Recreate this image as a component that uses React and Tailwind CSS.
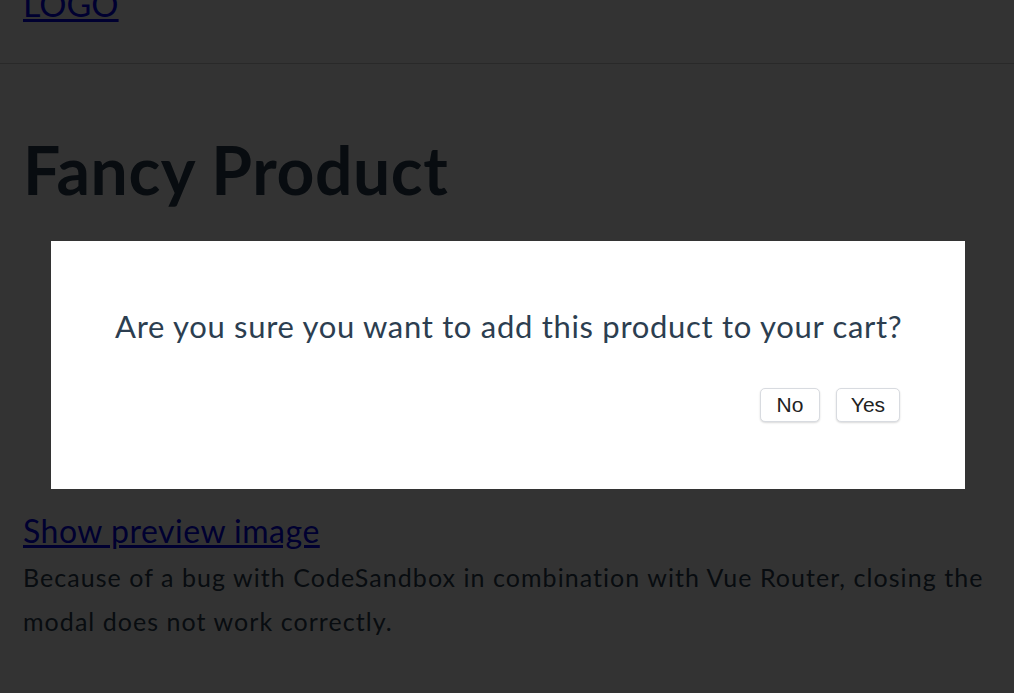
import React from "react";

const App = () => {
  return (
    <div
      className="relative min-h-screen bg-white text-[#2c3e50]"
      style={{ fontFamily: "Lato, 'Noto Sans', sans-serif" }}
    >
      {/* Header */}
      <header className="h-[64px] overflow-hidden border-b border-[#cccccc] px-[23px]">
        <a href="#" className="-mt-[18px] block w-fit text-[34px] leading-[44px] text-[#0000ee] underline">
          LOGO
        </a>
      </header>

      <main className="px-[23px]">
        <h1 className="mt-[66px] text-[66px] font-bold leading-[80px] tracking-[0.6px]">Fancy Product</h1>

        <div className="h-[301px]" />

        <a href="#" className="block w-fit text-[32px] leading-[40px] tracking-[0.5px] text-[#0000ee] underline">
          Show preview image
        </a>
        <p className="mt-[4px] text-[25px] leading-[44px] tracking-[1.05px]">
          Because of a bug with CodeSandbox in combination with Vue Router, closing the modal does not work
          correctly.
        </p>
      </main>

      {/* Overlay */}
      <div className="fixed inset-0 bg-black/80" />

      {/* Modal */}
      <div className="fixed left-[51px] top-[241px] flex h-[248px] w-[914px] flex-col bg-white pl-[64px] pr-[65px] pt-[65px]">
        <p className="whitespace-nowrap text-center text-[31px] leading-[40px] tracking-[0.7px] text-[#2c3e50]">
          Are you sure you want to add this product to your cart?
        </p>
        <div
          className="mt-[42px] flex justify-end gap-[16px]"
          style={{ fontFamily: "'Liberation Sans', Arial, sans-serif" }}
        >
          <button className="h-[34px] w-[60px] rounded-[5px] border border-[#d8dbe0] bg-white text-[21px] text-[#222222] shadow-[0_1px_2px_rgba(0,0,0,0.15)]">
            No
          </button>
          <button className="h-[34px] w-[64px] rounded-[5px] border border-[#d8dbe0] bg-white text-[21px] text-[#222222] shadow-[0_1px_2px_rgba(0,0,0,0.15)]">
            Yes
          </button>
        </div>
      </div>
    </div>
  );
};

export default App;
